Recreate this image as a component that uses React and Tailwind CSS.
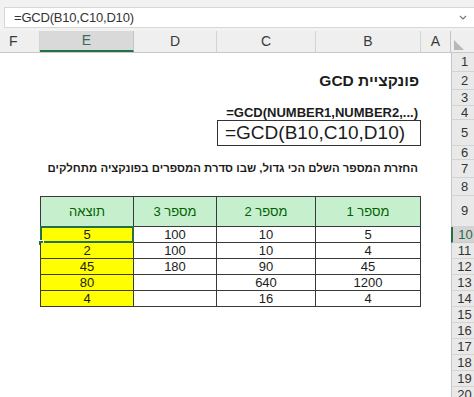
import React from "react";

const tableRows = [
  ["5", "100", "10", "5"],
  ["2", "100", "10", "4"],
  ["45", "180", "90", "45"],
  ["80", "", "640", "1200"],
  ["4", "", "16", "4"],
];

function RowHead({ n, selected }) {
  return (
    <div
      className={
        selected
          ? "w-[26px] shrink-0 bg-[#d4d4d4] border-l-2 border-l-[#217346] border-b border-b-[#c9c9c9] flex items-center pl-[2px] text-[13px] text-[#2c6a48]"
          : "w-[26px] shrink-0 bg-[#e9e9e9] border-l border-l-[#c4c4c4] border-b border-b-[#d3d3d3] flex items-center pl-[2px] text-[13px] text-[#333]"
      }
    >
      <span className="w-[21px] text-center">{n}</span>
    </div>
  );
}

function Row({ h, n, selected, children }) {
  return (
    <div className={`flex ${h}`}>
      <div className="w-[451px] shrink-0 flex">{children}</div>
      <RowHead n={n} selected={selected} />
    </div>
  );
}

export default function App() {
  return (
    <div className="w-[474px] h-[397px] overflow-hidden bg-white text-[#1c1c1c] font-['Liberation_Sans',Arial,sans-serif]">
      {/* formula bar */}
      <div className="h-[31px] bg-[#f2f2f2] pt-[7px] pl-[4px]">
        <div className="h-[21px] bg-white border border-[#d7d7d7] border-r-0 flex items-center justify-between pl-[9px] pr-[7px]">
          <span className="text-[13px] text-[#333] tracking-[-0.2px]">=GCD(B10,C10,D10)</span>
          <svg width="8" height="5" viewBox="0 0 8 5">
            <polyline points="1,1 4,4 7,1" fill="none" stroke="#777" strokeWidth="1.2" />
          </svg>
        </div>
      </div>

      {/* column headers */}
      <div className="flex h-[22px] bg-[#efefef] border-b border-[#c9c9c9] text-[14px] text-[#3a3a3a]">
        <div className="w-[40px] shrink-0 border-r border-[#d4d4d4] flex items-center pl-[9px]">F</div>
        <div className="w-[94px] shrink-0 bg-[#d9d9d9] border-b-2 border-[#217346] border-r border-r-[#c4c4c4] flex items-center justify-center text-[#3f6b55]">E</div>
        <div className="w-[83px] shrink-0 border-r border-[#d4d4d4] flex items-center justify-center">D</div>
        <div className="w-[99px] shrink-0 border-r border-[#d4d4d4] flex items-center justify-center">C</div>
        <div className="w-[105px] shrink-0 border-r border-[#d4d4d4] flex items-center justify-center">B</div>
        <div className="w-[30px] shrink-0 border-r border-[#c4c4c4] flex items-center justify-center">A</div>
        <div className="flex-1 flex items-end pl-[3px] pb-[2px]">
          <svg width="10" height="10" viewBox="0 0 10 10">
            <polygon points="0,0 0,10 10,10" fill="#b8b8b8" />
          </svg>
        </div>
      </div>

      <Row h="h-[19px]" n="1" />
      <Row h="h-[18px]" n="2">
        <div className="flex-1 flex items-center justify-end pr-[2px]">
          <span dir="rtl" className="text-[15.5px] font-bold">פונקציית GCD</span>
        </div>
        <div className="w-[30px]" />
      </Row>
      <Row h="h-[16px]" n="3" />
      <Row h="h-[14px]" n="4">
        <div className="flex-1 flex items-center justify-end pr-[3px]">
          <span className="text-[13px] font-bold">=GCD(NUMBER1,NUMBER2,...)</span>
        </div>
        <div className="w-[30px]" />
      </Row>
      <Row h="h-[26px]" n="5">
        <div className="w-[217px] shrink-0" />
        <div className="w-[204px] shrink-0 border border-[#333] flex items-center pl-[7px]">
          <span className="text-[19px]">=GCD(B10,C10,D10)</span>
        </div>
        <div className="w-[30px]" />
      </Row>
      <Row h="h-[14px]" n="6" />
      <Row h="h-[18px]" n="7">
        <div className="flex-1 flex items-center justify-end pr-[3px]">
          <span dir="rtl" className="text-[11.4px] font-bold">
            החזרת המספר השלם הכי גדול, שבו סדרת המספרים בפונקציה מתחלקים
          </span>
        </div>
        <div className="w-[30px]" />
      </Row>
      <Row h="h-[18px]" n="8" />
      <Row h="h-[31px]" n="9">
        <div className="w-[40px] shrink-0" />
        {[
          ["w-[94px] border-l", "תוצאה"],
          ["w-[83px]", "מספר 3"],
          ["w-[99px]", "מספר 2"],
          ["w-[105px]", "מספר 1"],
        ].map(([w, t]) => (
          <div
            key={t}
            className={`${w} shrink-0 bg-[#c6efce] border-t border-r border-b border-[#3a3a3a] flex items-center justify-center text-[13px] text-[#006100]`}
          >
            <span dir="rtl">{t}</span>
          </div>
        ))}
      </Row>
      {tableRows.map((r, i) => (
        <Row key={i} h="h-[16px]" n={String(10 + i)} selected={i === 0}>
          <div className="w-[40px] shrink-0" />
          <div className="w-[94px] shrink-0 relative bg-[#ffff00] border-l border-r border-b border-[#3a3a3a] flex items-center justify-center text-[13px]">
            {r[0]}
            {i === 0 && (
              <>
                <div className="absolute -left-[1px] -top-[1px] -right-[1px] -bottom-[1px] border-2 border-[#217346]" />
                <div className="absolute -left-[3px] -bottom-[4px] w-[6px] h-[6px] bg-[#217346] border border-white" />
              </>
            )}
          </div>
          <div className="w-[83px] shrink-0 border-r border-b border-[#3a3a3a] flex items-center justify-center text-[13px]">{r[1]}</div>
          <div className="w-[99px] shrink-0 border-r border-b border-[#3a3a3a] flex items-center justify-center text-[13px]">{r[2]}</div>
          <div className="w-[105px] shrink-0 border-r border-b border-[#3a3a3a] flex items-center justify-center text-[13px]">{r[3]}</div>
        </Row>
      ))}
      {["15", "16", "17", "18", "19", "20"].map((n) => (
        <Row key={n} h="h-[16px]" n={n} />
      ))}
    </div>
  );
}
